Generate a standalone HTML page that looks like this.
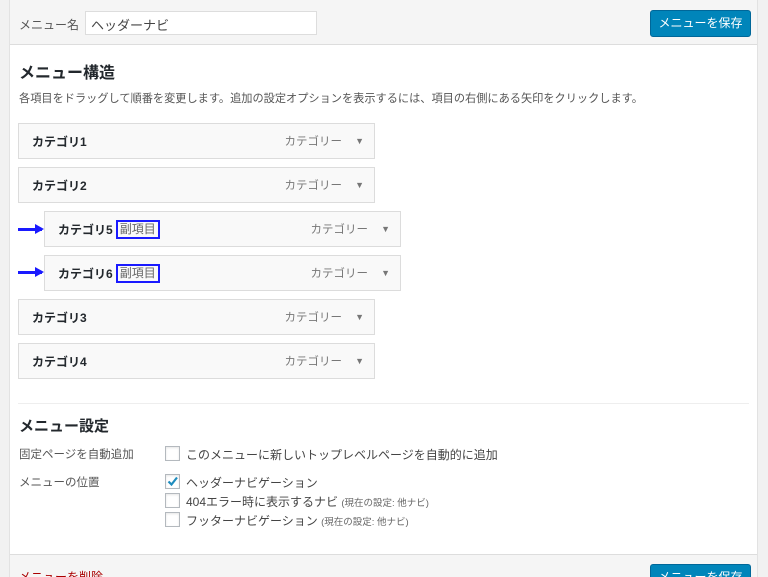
<!DOCTYPE html>
<html style="overflow:hidden;height:577px"><head><meta charset="utf-8"><style>
*{margin:0;padding:0;box-sizing:border-box}
body{width:768px;height:577px;overflow:hidden;background:#f1f1f1;font-family:"Liberation Sans","Noto Sans CJK JP",sans-serif;color:#444;font-size:12px;position:relative}
.panel{position:absolute;left:9px;top:0;width:749px;height:577px;background:#fff;border-left:1px solid #e2e2e2;border-right:1px solid #e2e2e2}
.hdr{position:absolute;left:0;top:0;width:100%;height:45px;background:#f5f5f5;border-bottom:1px solid #ddd}
.ftr{position:absolute;left:0;top:554px;width:100%;height:23px;background:#f5f5f5;border-top:1px solid #ddd}
.a{position:absolute;white-space:nowrap}
.btn{position:absolute;background:#0085ba;border:1px solid #006799;color:#fff;border-radius:3px;font-size:12px;text-align:center;line-height:24px;width:101px;height:27px}
.item{position:absolute;height:36px;background:#f9f9f9;border:1px solid #dcdcdc;width:357px}
.item b{position:absolute;left:13px;top:9px;font-size:12px;color:#23282d}
.item .t{position:absolute;right:32px;top:9px;color:#777;font-size:11.5px}
.item .v{position:absolute;right:10px;top:12px;color:#777;font-size:9px}
.sub{display:inline-block;border:2px solid #1a1aff;color:#666;font-weight:normal;padding:0 2px;margin-left:3px;line-height:15px;position:relative;top:-1px}
.arr{position:absolute;left:18px;width:24px;height:3px;background:#1a1aff}
.arr:after{content:"";position:absolute;right:-2px;top:-4px;border-left:9px solid #1a1aff;border-top:5.5px solid transparent;border-bottom:5.5px solid transparent}
.cb{position:absolute;left:165px;width:15px;height:15px;border:1px solid #b4b9be;background:#fff;box-shadow:inset 0 1px 2px rgba(0,0,0,.1)}
</style></head><body>
<div class="panel">
<div class="hdr"></div>
<div class="ftr"></div>
</div>
<div class="a" style="left:19px;top:16px;color:#555">メニュー名</div>
<div class="a" style="left:85px;top:11px;width:232px;height:24px;background:#fff;border:1px solid #ddd;padding:3px 5px;font-size:13px;color:#444">ヘッダーナビ</div>
<div class="btn" style="left:650px;top:10px">メニューを保存</div>
<div class="a" style="left:19px;top:59px;font-size:16px;font-weight:bold;color:#23282d">メニュー構造</div>
<div class="a" style="left:19px;top:90px;font-size:11.2px;color:#555">各項目をドラッグして順番を変更します。追加の設定オプションを表示するには、項目の右側にある矢印をクリックします。</div>

<div class="item" style="left:18px;top:123px"><b>カテゴリ1</b><span class="t">カテゴリー</span><span class="v">▼</span></div>
<div class="item" style="left:18px;top:167px"><b>カテゴリ2</b><span class="t">カテゴリー</span><span class="v">▼</span></div>
<div class="arr" style="top:228px"></div>
<div class="item" style="left:44px;top:211px"><b>カテゴリ5<span class="sub">副項目</span></b><span class="t">カテゴリー</span><span class="v">▼</span></div>
<div class="arr" style="top:271px"></div>
<div class="item" style="left:44px;top:255px"><b>カテゴリ6<span class="sub">副項目</span></b><span class="t">カテゴリー</span><span class="v">▼</span></div>
<div class="item" style="left:18px;top:299px"><b>カテゴリ3</b><span class="t">カテゴリー</span><span class="v">▼</span></div>
<div class="item" style="left:18px;top:343px"><b>カテゴリ4</b><span class="t">カテゴリー</span><span class="v">▼</span></div>

<div class="a" style="left:18px;top:403px;width:731px;height:1px;background:#eee"></div>
<div class="a" style="left:19px;top:415px;font-size:15px;font-weight:bold;color:#23282d">メニュー設定</div>
<div class="a" style="left:19px;top:446px;color:#555;font-size:11.5px">固定ページを自動追加</div>
<div class="cb" style="top:446px"></div>
<div class="a" style="left:186px;top:446px;font-size:12px">このメニューに新しいトップレベルページを自動的に追加</div>
<div class="a" style="left:19px;top:474px;color:#555;font-size:11.5px">メニューの位置</div>
<div class="cb" style="top:474px"><svg width="15" height="15" style="position:absolute;left:-1px;top:-1px"><path d="M3.5 7.5 L6.5 10.5 L12 3.5" stroke="#1e8cbe" stroke-width="2.2" fill="none"/></svg></div>
<div class="a" style="left:186px;top:474px">ヘッダーナビゲーション</div>
<div class="cb" style="top:493px"></div>
<div class="a" style="left:186px;top:493px">404エラー時に表示するナビ <span style="font-size:9.5px;color:#666">(現在の設定: 他ナビ)</span></div>
<div class="cb" style="top:512px"></div>
<div class="a" style="left:186px;top:512px">フッターナビゲーション <span style="font-size:9.5px;color:#666">(現在の設定: 他ナビ)</span></div>

<div class="a" style="left:19px;top:568px;color:#a00">メニューを削除</div>
<div class="btn" style="left:650px;top:564px;height:13px;overflow:hidden;border-bottom:none;border-radius:3px 3px 0 0">メニューを保存</div>
</body></html>
